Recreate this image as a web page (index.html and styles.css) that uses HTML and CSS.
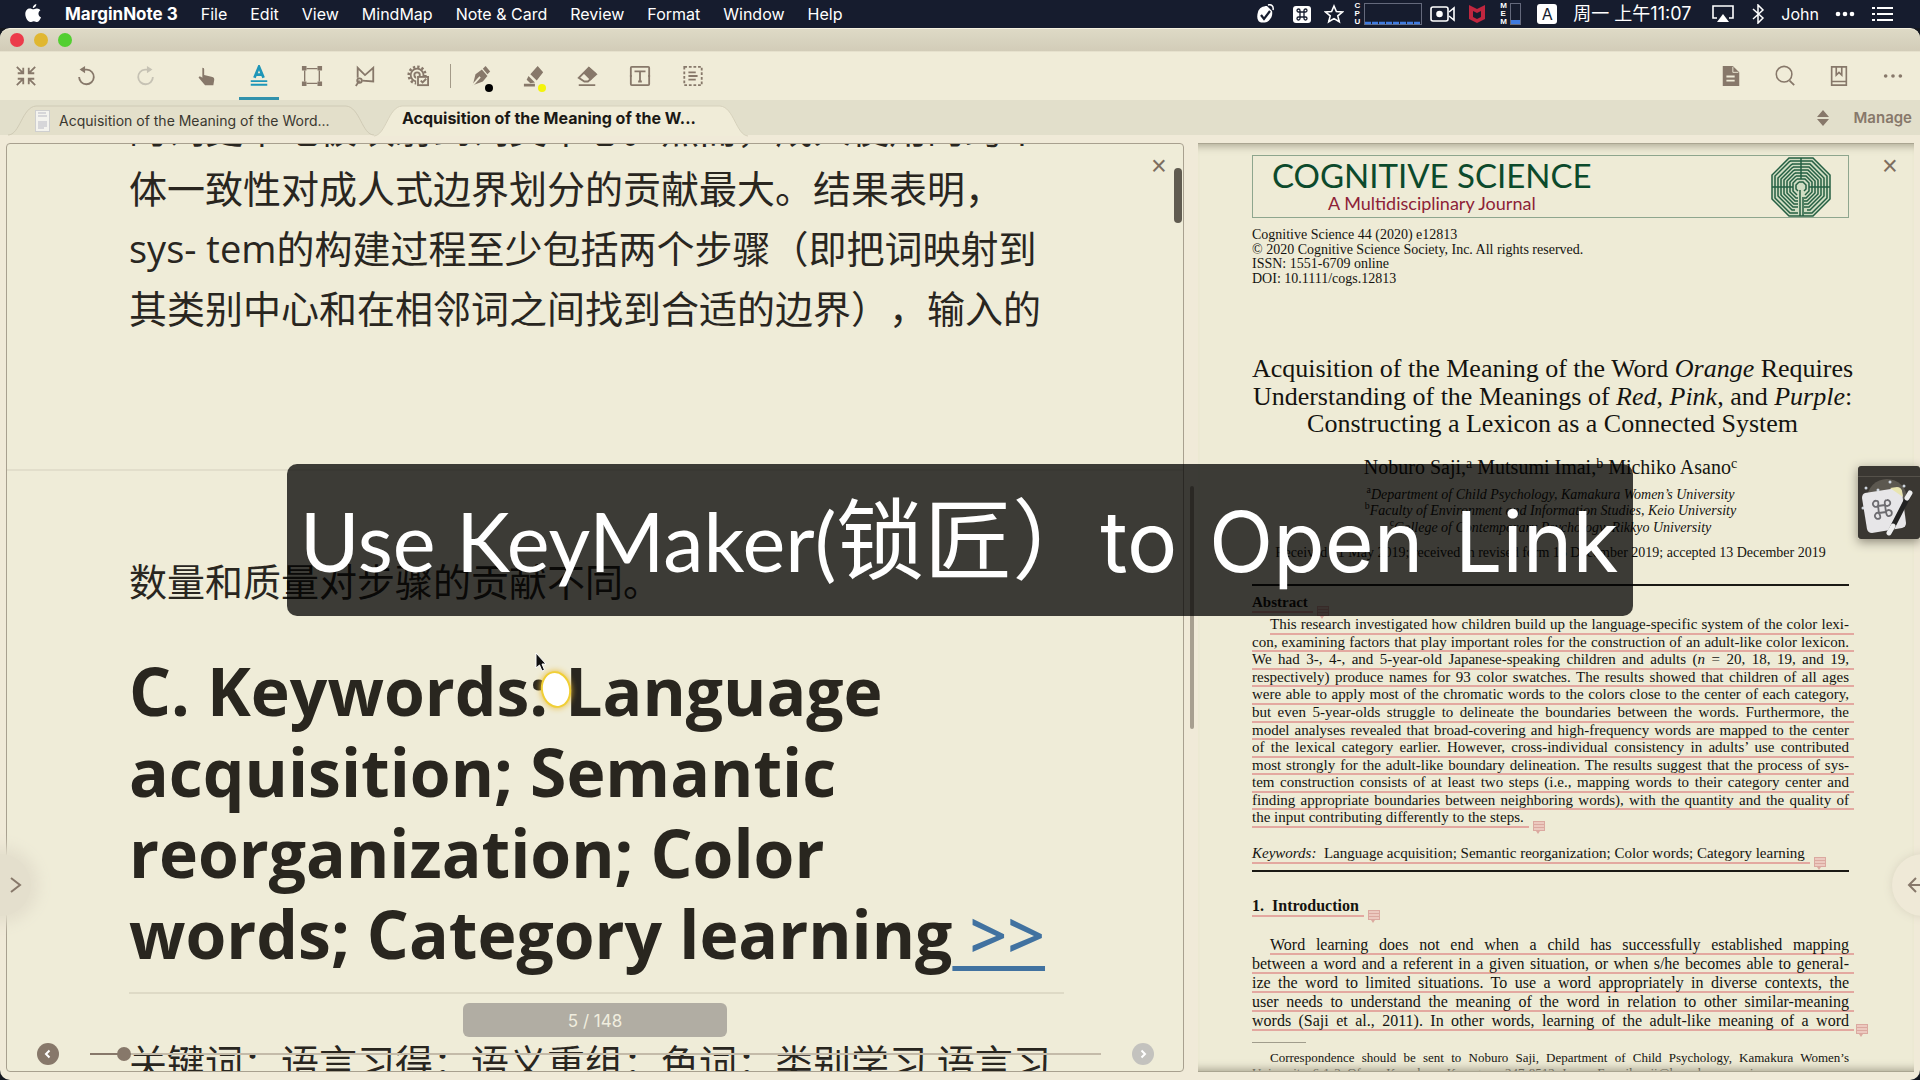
FILE: index.html
```html
<!DOCTYPE html>
<html lang="en">
<head>
<meta charset="utf-8">
<title>MarginNote 3</title>
<link rel="stylesheet" href="styles.css">
</head>
<body>
<header class="menubar">
  <nav class="menus" aria-label="Application menu">
    <svg class="apple" width="18" height="20" viewBox="0 0 18 20" fill="#fff"><path d="M12.300 0c.2 1.700-1.500 4-3.500 4C8.600 2.200 10.400.3 12.300 0zM9.300 5.300c.8 0 2-1 3.700-.9 1.400.1 2.600.7 3.400 1.900-2.900 1.900-2.400 5.800.6 7-.6 1.800-2.100 4.700-3.800 4.800-1.300 0-1.800-.9-3.400-.9s-2.100.9-3.400.9C4 18 1.300 13.700 1.300 10c0-3.500 2.200-5.500 4.500-5.500 1.500 0 2.700.8 3.500.8z"/></svg>
    <a class="app" href="#">MarginNote 3</a><a href="#">File</a><a href="#">Edit</a><a href="#">View</a><a href="#">MindMap</a><a href="#">Note &amp; Card</a><a href="#">Review</a><a href="#">Format</a><a href="#">Window</a><a href="#">Help</a>
  </nav>
  <div class="status">
    <svg width="22" height="20" viewBox="0 0 22 20"><path d="M4 8c1-4 5-6 9-6l5 5c1 4-1 9-5 11-4 1-8 1-9-2-1-2-1-5 0-8z" fill="#fff"/><path d="M14 1c3-1 6 1 5 5" fill="none" stroke="#fff" stroke-width="1.500"/><path d="M7 11l3 4 6-8" fill="none" stroke="#161c2e" stroke-width="2.200"/></svg>
    <svg class="s-cmd" width="20" height="20" viewBox="0 0 20 20"><rect x="1" y="2" width="18" height="17" rx="3" fill="#fff"/><path d="M8 8v5M12 8v5M8 8h4M8 13h4M8 8H6.500a1.500 1.500 0 1 1 1.500-1.500zM12 8V6.500A1.500 1.500 0 1 1 13.500 8zM8 13v1.500A1.500 1.500 0 1 1 6.500 13zM12 13h1.500a1.500 1.500 0 1 1-1.500 1.500z" fill="none" stroke="#161c2e" stroke-width="1.300"/></svg>
    <svg class="s-star" width="20" height="20" viewBox="0 0 20 20"><path d="M10 2l2.400 5.500 6 .5-4.600 3.900 1.500 5.900L10 14.600l-5.300 3.200 1.500-5.900L1.600 8l6-.5z" fill="none" stroke="#fff" stroke-width="1.600"/></svg>
    <span class="tiny">C<br>P<br>U</span>
    <svg width="58" height="22" viewBox="0 0 58 22"><rect x=".5" y=".5" width="57" height="21" fill="none" stroke="#64697c"/><path d="M1 20h56" stroke="#3f7be0" stroke-width="2.500" stroke-dasharray="6 1"/></svg>
    <svg class="s-cam" width="26" height="20" viewBox="0 0 26 20" fill="none" stroke="#fff" stroke-width="1.600"><rect x="1" y="3" width="17" height="14" rx="2"/><path d="M19 8l5-4v12l-5-4"/><circle cx="9.500" cy="10" r="2.500" fill="#fff"/></svg>
    <svg class="s-shield" width="18" height="20" viewBox="0 0 18 20"><path d="M1 1l8 4 8-4v14l-8 4-8-4zM5 7v6l4 2 4-2V7l-4 2z" fill="#c0263f" fill-rule="evenodd"/></svg>
    <span class="tiny s-mem">M<br>E<br>M</span>
    <svg width="11" height="22" viewBox="0 0 11 22"><rect x=".5" y=".5" width="10" height="21" fill="none" stroke="#64697c"/><rect x="1" y="17" width="9" height="4" fill="#3f7be0"/></svg>
    <span class="input-src">A</span>
    <span class="clock">周一 上午11:07</span>
    <svg class="s-air" width="24" height="20" viewBox="0 0 24 20"><path d="M6 14H2V2h20v12h-4" fill="none" stroke="#fff" stroke-width="1.600"/><path d="M12 10l6 8H6z" fill="#fff"/></svg>
    <svg width="14" height="20" viewBox="0 0 14 20"><path d="M2 5l10 9-5 5V1l5 5-10 9" fill="none" stroke="#fff" stroke-width="1.500"/></svg>
    <span class="user">John</span>
    <svg width="20" height="20" viewBox="0 0 20 20" fill="#fff"><circle cx="3" cy="10" r="2.300"/><circle cx="10" cy="10" r="2.300"/><circle cx="17" cy="10" r="2.300"/></svg>
    <svg width="24" height="20" viewBox="0 0 24 20"><path d="M6 4h16M6 10h16M6 16h16" stroke="#fff" stroke-width="2.200"/><path d="M1 4h3M1 10h3M1 16h3" stroke="#fff" stroke-width="2.200"/></svg>
  </div>
</header>

<div class="window">
  <div class="titlebar"><i class="dot close"></i><i class="dot min"></i><i class="dot max"></i></div>

  <div class="toolbar">
    <div class="tools">
      <button aria-label="Compress"><svg viewBox="0 0 24 24"><path d="M2 2l6 6M9 3v6H3M22 2l-6 6M15 3v6h6M2 22l6-6M9 21v-6H3M22 22l-6-6M15 21v-6h6" /></svg></button>
      <button aria-label="Undo"><svg viewBox="0 0 24 24"><path d="M7 5h6a8 8 0 1 1-8.500 8"/><path d="M11 1v8L5 5z" class="f"/></svg></button>
      <button aria-label="Redo" class="off"><svg viewBox="0 0 24 24"><path d="M17 5h-6a8 8 0 1 0 8.500 8"/><path d="M13 1v8l6-4z" class="f"/></svg></button>
      <button aria-label="Hand"><svg viewBox="0 0 24 24"><path class="f" d="M8 3c2 0 2 1 2 2v6l9 2c2 .5 2 2 2 3l-1 6h-9c-2-2-5-6-7-8 0-2 2-2 4 0V5c0-1 0-2 0-2z"/></svg></button>
      <button aria-label="Highlight text" class="on"><svg viewBox="0 0 24 24"><path d="M7 14l5-12 5 12M9 10.500h6" stroke-width="3"/><path d="M3 17.500h18M3 21.500h18"/></svg></button>
      <button aria-label="Area select"><svg viewBox="0 0 24 24"><path d="M4 6v12M20 6v12M6 4h12M6 20h12" stroke-width="1.500"/><path class="f" d="M1 1h5v5H1zM18 1h5v5h-5zM1 18h5v5H1zM18 18h5v5h-5z"/></svg></button>
      <button aria-label="Lasso"><svg viewBox="0 0 24 24"><path d="M4 14V3l8 8 9-8v15l-12-1M2 23l4-6"/><circle cx="6" cy="17" r="2.500"/></svg></button>
      <button aria-label="Auto tools"><svg viewBox="0 0 24 24"><circle cx="11" cy="11" r="9" stroke-width="3" stroke-dasharray="2.500 2.200"/><circle cx="11" cy="11" r="7"/><circle cx="11" cy="11" r="3"/><path d="M10 12h14v12H10z" fill="#f0ecd8" stroke="none"/><rect x="12" y="13" width="11" height="9"/><path d="M15 17l2 2 4-4"/></svg></button>
      <span class="sep"></span>
      <button aria-label="Pen"><svg viewBox="0 0 24 24"><path class="f" d="M3 22L6 10l7-5 6 7-5 6z"/><path d="M3 22l8-9" stroke="#f0ecd8"/><path class="f" d="M14 4l3-3 5 6-3 3z"/></svg><i class="ink black"></i></button>
      <button aria-label="Highlighter"><svg viewBox="0 0 24 24"><path class="f" d="M8 10l8-9 6 7-7 9zM6 12l7 7-5 1-4-4z"/><path d="M1 22h12" stroke-width="3"/></svg><i class="ink yellow"></i></button>
      <button aria-label="Eraser"><svg viewBox="0 0 24 24"><path d="M9 18l-6-4L14 3l8 7-9 8z"/><path class="f" d="M8 9l6-7 8 7-6 8z"/><path d="M3 22h18"/></svg></button>
      <button aria-label="Text box"><svg viewBox="0 0 24 24"><rect x="2" y="2" width="20" height="20" rx="1"/><path d="M7 8V7h10v1M12 7v11M10 18h4M1 12h2M21 12h2"/></svg></button>
      <button aria-label="Select text"><svg viewBox="0 0 24 24"><rect x="2.500" y="2" width="19" height="20" stroke-dasharray="3 2"/><path d="M7 8h8M7 12h10M7 16h8"/></svg></button>
    </div>
    <div class="tools right">
      <button aria-label="Document"><svg viewBox="0 0 24 24"><path class="f" d="M3 1h11l7 7v15H3z"/><path d="M7 12.500h9M7 17h9" stroke="#f0ecd8"/><path d="M14 2v6h6" stroke="#f0ecd8" stroke-width="1"/></svg></button>
      <button aria-label="Search"><svg viewBox="0 0 24 24"><circle cx="11" cy="10" r="8.500" stroke-width="1.700"/><path d="M17 17l5 5"/></svg></button>
      <button aria-label="Bookmarks"><svg viewBox="0 0 24 24"><path d="M4 2h16v20H4zM4 18h16M9 2v9l3-3 3 3V2" stroke-width="1.800"/></svg></button>
      <button aria-label="More"><svg viewBox="0 0 24 24"><g class="f"><circle cx="4" cy="12" r="2"/><circle cx="12" cy="12" r="2"/><circle cx="20" cy="12" r="2"/></g></svg></button>
    </div>
  </div>

  <div class="tabbar">
    <a class="tab first" href="#"><svg class="shape" viewBox="0 0 366 30" preserveAspectRatio="none"><path d="M0 30C12 30 14 2 28 1H338C352 2 354 30 366 30" fill="#e3dfca" stroke="#cfcab5"/></svg>
      <svg class="thumb" width="15" height="22" viewBox="0 0 15 22"><rect x=".5" y=".5" width="14" height="21" fill="#f4f3ee" stroke="#cfcfcf"/><path d="M3 3h8M3 6h9M3 12h9M3 14h9M3 16h9M3 18h6" stroke="#b9b9c4"/></svg>
      <span>Acquisition of the Meaning of the Word...</span></a>
    <a class="tab active" href="#"><svg class="shape" viewBox="0 0 374 30" preserveAspectRatio="none"><path d="M0 31C12 30 14 2 28 1H346C360 2 362 30 374 31" fill="#f0ecd8" stroke="#d6d1bc"/></svg>
      <span>Acquisition of the Meaning of the W...</span></a>
    <div class="manage">
      <svg width="12" height="16" viewBox="0 0 12 16" fill="#87786a"><path d="M6 0l6 7H0zM6 16l6-7H0z"/></svg>
      <button>Manage</button>
    </div>
  </div>

  <main class="workspace">
    <section class="pane left">
      <article class="reader" lang="zh">
        <p>的词更早地被映射到词类中心。然而，成人使用的跨个<br>体一致性对成人式边界划分的贡献最大。结果表明，<br>sys- tem的构建过程至少包括两个步骤（即把词映射到<br>其类别中心和在相邻词之间找到合适的边界），输入的</p>
        <hr class="page-break">
        <p class="after">数量和质量对步骤的贡献不同。</p>
        <h1>C. Keywords: Language<br>acquisition; Semantic<br>reorganization; Color<br>words; Category learning<a href="#"> &gt;&gt;</a></h1>
        <p class="next">关键词：语言习得；语义重组；色词；类别学习 语言习</p>
      </article>
      <button class="x" aria-label="Close document">×</button>
      <i class="scroll"></i>
      <span class="page-pill">5 / 148</span>
      <div class="pager">
        <button class="round" aria-label="Previous page"><svg viewBox="0 0 22 22"><path d="M12.500 7.500L9 11l3.500 3.500" /></svg></button>
        <input type="range" min="0" max="1000" value="27" aria-label="Page">
        <button class="round dim" aria-label="Next page"><svg viewBox="0 0 22 22"><path d="M9.500 7.500L13 11l-3.500 3.500"/></svg></button>
      </div>
    </section>

    <section class="pane right-pane">
      <article class="paper">
        <div class="banner">
          <div class="mast"><strong>COGNITIVE SCIENCE</strong><em>A Multidisciplinary Journal</em></div>
          <svg class="maze" width="60" height="60" viewBox="-30 -30 60 60" fill="none" stroke="#245f42" stroke-width="1.500"><path fill="#cfdcc2" d="M-12-29H12L29-12V12L12 29H-12L-29 12V-12z"/><path d="M-11-26H11L26-11V11L11 26H3M-3 26H-11L-26 11V-11L-11-26M-9-23H9L23-9V9L9 23H6M-6 23H-9L-23 9V-9L-9-23M-8-20H8L20-8V8L8 20H3M-3 20H-8L-20 8V-8L-8-20M-7-17H7L17-7V7L7 17H3M-3 17H-7L-17 7V-7L-7-17M-6-14H6L14-6V6L6 14H3M-3 14H-6L-14 6V-6L-6-14M-5-11H5L11-5V5L5 11H3M-3 11H-5L-11 5V-5L-5-11M-4-8H4L8-4V4L4 8M-4 8L-8 4V-4L-4-8M-2-5H2L5-2V2L3 4M-3 4L-5 2V-2L-2-5M-1 29V3M2 29V10M0-29V-8M-29 0H-8M8 0H29"/></svg>
        </div>
        <div class="meta"><span>Cognitive Science 44 (2020) e12813</span><span>© 2020 Cognitive Science Society, Inc. All rights reserved.</span><span>ISSN: 1551-6709 online</span><span>DOI: 10.1111/cogs.12813</span></div>
        <h2><span>Acquisition of the Meaning of the Word <i>Orange</i> Requires</span><span>Understanding of the Meanings of <i>Red</i>, <i>Pink</i>, and <i>Purple</i>:</span><span>Constructing a Lexicon as a Connected System</span></h2>
        <p class="authors">Noburo Saji,<sup>a</sup> Mutsumi Imai,<sup>b</sup> Michiko Asano<sup>c</sup></p>
        <div class="affil"><span><sup>a</sup>Department of Child Psychology, Kamakura Women’s University</span><span><sup>b</sup>Faculty of Environment and Information Studies, Keio University</span><span><sup>c</sup>College of Contemporary Psychology, Rikkyo University</span></div>
        <p class="received">Received 21 May 2019; received in revised form 13 December 2019; accepted 13 December 2019</p>
        <hr class="rule r1">
        <h3 class="abs"><span class="u">Abstract</span><i class="note"></i></h3>
        <div class="lines abstract">
          <span class="ind">This research investigated how children build up the language-specific system of the color lexi-</span>
          <span>con, examining factors that play important roles for the construction of an adult-like color lexicon.</span>
          <span>We had 3-, 4-, and 5-year-old Japanese-speaking children and adults (<i>n</i> = 20, 18, 19, and 19,</span>
          <span>respectively) produce names for 93 color swatches. The results showed that children of all ages</span>
          <span>were able to apply most of the chromatic words to the colors close to the center of each category,</span>
          <span>but even 5-year-olds struggle to delineate the boundaries between the words. Furthermore, the</span>
          <span>model analyses revealed that broad-covering and high-frequency words are mapped to the center</span>
          <span>of the lexical category earlier. However, cross-individual consistency in adults’ use contributed</span>
          <span>most strongly for the adult-like boundary delineation. The results suggest that the process of sys-</span>
          <span>tem construction consists of at least two steps (i.e., mapping words to their category center and</span>
          <span>finding appropriate boundaries between neighboring words), with the quantity and the quality of</span>
          <div class="short"><span class="u">the input contributing differently to the steps.</span><i class="note"></i></div>
        </div>
        <p class="kw short"><span class="u"><i>Keywords:</i>&nbsp; Language acquisition; Semantic reorganization; Color words; Category learning</span><i class="note"></i></p>
        <hr class="rule r2">
        <h3 class="intro"><span class="u">1.&nbsp; Introduction</span><i class="note"></i></h3>
        <div class="lines body">
          <span class="ind">Word learning does not end when a child has successfully established mapping</span>
          <span>between a word and a referent in a given situation, or when s/he becomes able to general-</span>
          <span>ize the word to limited situations. To use a word appropriately in diverse contexts, the</span>
          <span>user needs to understand the meaning of the word in relation to other similar-meaning</span>
          <span>words (Saji et al., 2011). In other words, learning of the adult-like meaning of a word</span>
          <i class="note end"></i>
        </div>
        <hr class="foot-rule">
        <div class="foot"><span class="ind">Correspondence should be sent to Noburo Saji, Department of Child Psychology, Kamakura Women’s</span><span class="nat">University, 6-1-3, Ofuna, Kamakura, Kanagawa 247-8512, Japan. E-mail: saji@kamakura-u.ac.jp</span></div>
      </article>
      <button class="x" aria-label="Close paper">×</button>
    </section>
  </main>

  <i class="divider"></i>
  <button class="edge edge-l" aria-label="Open outline"><svg width="14" height="20" viewBox="0 0 14 20"><path d="M2 3l9 7-9 7"/></svg></button>
  <button class="edge edge-r" aria-label="Open notes"><svg width="16" height="20" viewBox="0 0 16 20"><path d="M9 3l-7 7 7 7M2 10h16"/></svg></button>
</div>

<div class="keymaker"><svg viewBox="0 0 62 73"><rect width="62" height="73" rx="3" fill="#3a3732"/><path d="M0 10.500h62" stroke="#55514a"/><circle cx="29" cy="33" r="20" fill="#5c5850"/><g fill="#cfd6df"><circle cx="8" cy="22" r="1.500"/><circle cx="32" cy="16" r="1.500"/><circle cx="46" cy="20" r="1.500"/><circle cx="20" cy="24" r="1.500"/><circle cx="5" cy="42" r="1.500"/></g><path d="M7 27l32-5q4 0 5 4l4 31q0 4-4 5l-30 5q-4 0-5-4L4 32q0-4 3-5z" fill="#e7e6e8"/><path d="M32 22l7-1q4 0 5 4l1 6z" fill="#e9e5b0"/><path d="M20 40l7-1M21 47l7-1M20 39l1 9M27 38l1 9M20 40a3 3 0 1 1-1-5q2 0 1 5zM27 39q-1-5 2-5a3 3 0 1 1-2 5zM21 47a3 3 0 1 0 1 5q1-1-1-5zM28 46q1 5 3 4a3 3 0 1 0-3-4z" fill="none" stroke="#6d6c70" stroke-width="1.800"/><path d="M32 66L52 27" stroke="#222" stroke-width="5" stroke-linecap="round"/><path d="M31 67l4-7M49 32l3-5" stroke="#eee" stroke-width="5" stroke-linecap="round"/></svg></div>
<div class="caption" lang="zh">Use KeyMaker(<span class="cjk">锁匠）</span><span class="tail">to <b>Open</b> <b>Link</b></span></div>
<i class="click"></i>
<svg class="cursor" width="12" height="20" viewBox="0 0 12 20"><path d="M1 1v15l3.500-3 2.500 6 2.500-1L7 12h4z" fill="#111" stroke="#fff"/></svg>
</body>
</html>
```
FILE: styles.css
```css
* { box-sizing: border-box; }
body { margin: 0; height: 100vh; display: flex; flex-direction: column; overflow: hidden; position: relative; background: #14171f; font-family: Inter, "Noto Sans CJK SC", sans-serif; color: #22201b; text-spacing-trim: space-all; }
p, h1, h2, h3 { margin: 0; font-weight: normal; }
a { color: inherit; text-decoration: none; }
button { border: 0; padding: 0; background: none; font: inherit; color: inherit; }
hr { border: 0; margin: 0; }
svg { display: block; flex: none; }

/* system menu bar */
.menubar { height: 28px; flex: none; display: flex; justify-content: space-between; align-items: center; padding: 0 25px 1px 24px; background: #161c2e; color: #fff; font-size: 16px; line-height: 26px; white-space: nowrap; }
.menus { display: flex; align-items: center; gap: 23px; }
.menus .app { font-size: 17px; font-weight: 700; }
.status { display: flex; align-items: center; gap: 16px; }
.status .tiny { width: 6px; margin-left: -6px; margin-right: -12px; font: bold 8px/8px "Liberation Sans", sans-serif; text-align: center; }
.status .s-star { margin-left: -4px; }
.status .s-cam { margin-left: -8px; }
.status .s-shield { margin-left: -4px; }
.status .s-mem { margin-left: -2px; }
.input-src { width: 20px; height: 20px; border-radius: 3px; background: #fff; color: #161c2e; text-align: center; line-height: 20px; }
.clock { margin-right: 4px; font-size: 18px; }

/* window chrome */
.window { flex: 1; min-height: 0; position: relative; display: flex; flex-direction: column; border-radius: 10px; overflow: hidden; background: #f0ead8; border-top: 1px solid #f5f1e0; }
.titlebar { height: 22px; flex: none; display: flex; align-items: center; gap: 10px; padding-left: 10px; background: linear-gradient(#dedac6, #d2ccb8); }
.dot { width: 14px; height: 14px; border-radius: 50%; }
.close { background: #ec3b4a; }
.min { background: #e0b731; }
.max { background: #53cf31; }
.toolbar { height: 49px; flex: none; display: flex; justify-content: space-between; background: #f0ecd8; border-top: 1px solid #e6e1cd; }
.tools { display: flex; align-items: center; padding-left: 2px; }
.tools button { position: relative; width: 48px; height: 48px; display: grid; place-items: center; color: #87786a; margin-right: 12px; }
.tools button:nth-child(n+4) { margin-right: 5px; }
.tools svg { width: 22px; height: 22px; fill: none; stroke: currentColor; stroke-width: 2; }
.tools .f { fill: currentColor; stroke: none; }
.tools .off { color: #c6c2b4; }
.tools .on { color: #1e96b8; }
.tools .on::after { content: ""; position: absolute; left: 4px; right: 4px; bottom: 0; height: 3px; background: #3292ac; }
.sep { width: 1px; height: 24px; margin: 0 6px 0 3px; background: #a39a88; }
.ink { position: absolute; left: 28px; bottom: 8px; width: 8px; height: 8px; border-radius: 50%; }
.black { background: #000; }
.yellow { background: #f4f40c; }
.tools.right { padding-right: 3px; }
.tools.right button { margin: 0 0 0 6px; }

.tabbar { height: 35px; flex: none; display: flex; align-items: flex-end; background: #e2dfcb; padding: 0 8px; line-height: 22px; white-space: nowrap; }
.tab { position: relative; height: 30px; display: flex; align-items: center; }
.tab > * { position: relative; }
.tab .shape { position: absolute; inset: 0; width: 100%; height: 100%; overflow: visible; }
.first { width: 366px; padding: 1px 0 0 27px; gap: 9px; font-size: 14px; color: #3a372f; }
.active { width: 374px; padding: 0 0 4px 28px; font-size: 16px; font-weight: 700; color: #1b1915; }
.manage { margin-left: auto; height: 35px; display: flex; align-items: center; gap: 25px; font-size: 15px; color: #87786a; font-weight: 600; }

/* two document panes */
.workspace { flex: 1; min-height: 0; display: grid; grid-template-columns: 1178fr 716fr; gap: 14px; padding: 8px 6px; }
.pane { position: relative; overflow: hidden; min-width: 0; }
.left { border: 1px solid #a8a08f; border-radius: 4px; background: #efecd8; }
.right-pane { border: solid #aaa591; border-width: 1px 0; background: #eeebd6; }
.right-pane::after { content: ""; position: absolute; inset: 0; pointer-events: none; box-shadow: inset 0 10px 9px -8px #aaa591, inset 0 -10px 9px -8px #aaa591; }

.reader { margin-top: -46px; font-family: "Open Sans", "Noto Sans CJK SC", sans-serif; color: #29261f; white-space: nowrap; }
.reader p { padding-left: 122px; font-size: 38px; line-height: 60px; }
.page-break { height: 2px; margin-top: 131px; background: #e2decb; }
.reader .after { margin-top: 80px; }
.reader h1 { margin: 39px 119px 0 122px; padding-bottom: 18px; border-bottom: 2px solid #dedac6; font-size: 66px; line-height: 81px; font-weight: 700; }
.reader h1 a { color: #4172a0; font-weight: 600; text-decoration: underline; text-decoration-thickness: 5px; text-underline-offset: 7px; }
.reader .next { margin-top: 38px; }

.x { position: absolute; top: 8px; right: 14px; width: 20px; height: 28px; font: 27px/28px "Liberation Sans", sans-serif; color: #7d6e60; }
.scroll { position: absolute; top: 24px; right: 1px; width: 8px; height: 55px; border-radius: 4px; background: #605b50; }
.page-pill { position: absolute; left: 456px; bottom: 34px; width: 264px; height: 34px; border-radius: 6px; background: #b1ada3; color: #f0eddf; text-align: center; font-size: 17px; line-height: 36px; }
.pager { position: absolute; left: 30px; right: 29px; bottom: 6px; display: flex; align-items: center; justify-content: space-between; gap: 31px; }
.round { width: 22px; height: 22px; flex: none; border-radius: 50%; background: #87786a; }
.round svg { fill: none; stroke: #fff; stroke-width: 2; }
.dim { background: #c3c2be; }
.pager input { flex: 1; appearance: none; height: 14px; margin: 0; background: linear-gradient(90deg, #87786a 3%, #c4bba9 3%) center / 100% 2px no-repeat; }
.pager input::-webkit-slider-thumb { appearance: none; width: 14px; height: 14px; border-radius: 50%; background: #87786a; }

/* journal page */
.paper { padding: 11px 65px 0 54px; font-family: "Liberation Serif", serif; color: #14130f; white-space: nowrap; }
.paper span { display: block; }
.paper sup { font-size: 70%; line-height: 0; vertical-align: 6px; font-style: normal; }
.banner { height: 63px; display: flex; justify-content: space-between; align-items: center; padding: 0 17px 0 19px; border: 1px solid #8ea68e; }
.mast { display: grid; font-family: Lato, sans-serif; padding-bottom: 4px; }
.mast strong { font-size: 33px; line-height: 36px; font-weight: 400; color: #0c4a2c; }
.mast em { font-style: normal; font-size: 18px; line-height: 20px; text-align: right; padding-right: 56px; color: #8d2237; }
.meta, .affil, .paper h2, .lines { display: grid; grid-auto-rows: 1fr; }
.meta { min-height: 58px; margin-top: 10px; font-size: 14px; line-height: 14px; }
.paper h2 { min-height: 83px; margin-top: 69px; font-size: 26px; line-height: 27px; justify-items: center; }
.authors { margin-top: 17px; font-size: 20px; line-height: 24px; text-align: center; }
.affil { min-height: 49px; margin-top: 8px; font-size: 14px; line-height: 16px; font-style: italic; justify-items: center; }
.received { margin-top: 8px; font-size: 14px; line-height: 18px; text-align: center; }
.rule { height: 2px; background: #1a1914; }
.r1 { margin-top: 22px; }
.r2 { margin-top: 6px; }
.paper h3 { display: flex; font-weight: 700; }
.abs { margin-top: 8px; font-size: 15px; line-height: 17px; }
.u { border-bottom: 2px solid #e3a8a0; padding-right: 5px; }
.lines > span { border-bottom: 2px solid #e3a8a0; margin-right: -5px; padding-right: 5px; text-align-last: justify; }
.lines > .ind { margin-left: 18px; }
.abstract { min-height: 211px; margin-top: 4px; font-size: 15px; line-height: 15px; }
.short { display: flex; }
.kw { margin-top: 17px; font-size: 15px; line-height: 17px; }
.intro { margin-top: 25px; font-size: 16px; line-height: 18px; }
.body { position: relative; min-height: 95px; margin-top: 19px; font-size: 16px; line-height: 17px; }
.note { position: relative; flex: none; align-self: flex-end; width: 12px; height: 10px; margin: 0 0 -3px 4px; border: 1px solid #dba9a0; background: repeating-linear-gradient(#ecc9bf 0 2px, #dba9a0 2px 3px); }
.note::after { content: ""; position: absolute; left: 2px; top: 9px; border: solid transparent; border-width: 3px 2px 0; border-top-color: #dba9a0; }
.note.end { position: absolute; right: -19px; bottom: 0; }
.foot-rule { width: 54px; height: 1px; margin-top: 11px; background: #a09c8c; }
.foot { margin-top: 7px; font-size: 13px; line-height: 15px; }
.foot .ind { padding-left: 18px; text-align-last: justify; }

/* overlays */
.divider { position: absolute; left: 62%; top: 457px; width: 4px; height: 243px; border-radius: 2px; background: #a79f90; }
.edge { position: absolute; bottom: 164px; width: 62px; height: 62px; border-radius: 50%; background: #eae5d2; }
.edge svg { fill: none; stroke: #87786a; stroke-width: 2; }
.edge-l { left: -31px; padding-left: 40px; background: #e4dfcd; box-shadow: 0 0 14px 8px #e4dfcd; }
.edge-r { right: -34px; padding-left: 15px; background: #efe9d7; box-shadow: 0 0 10px #d9d3c0; }
.keymaker { position: absolute; right: 0; top: 466px; width: 62px; height: 73px; box-shadow: 0 3px 10px #8d8879; }
.caption { position: absolute; left: 15%; right: 15%; top: 464px; height: 152px; padding-left: 13px; border-radius: 10px; margin: 0 -1px; background: rgba(0, 0, 0, .75); color: #fff; font: 81px/154px Lato, "Noto Sans CJK SC", sans-serif; white-space: nowrap; }
.caption .cjk { font-size: 88px; line-height: 0; }
.caption .tail { font-family: Inter, sans-serif; font-size: 84px; line-height: 0; }
.caption b { font-weight: 400; margin-left: 8px; }
.click { position: absolute; left: 541px; top: 671px; width: 30px; height: 37px; border: 2px solid #f0cf35; border-radius: 50%; background: #fff; box-shadow: 0 0 6px #eab92f; transform: rotate(-12deg); }
.cursor { position: absolute; left: 535px; top: 652px; }
```
